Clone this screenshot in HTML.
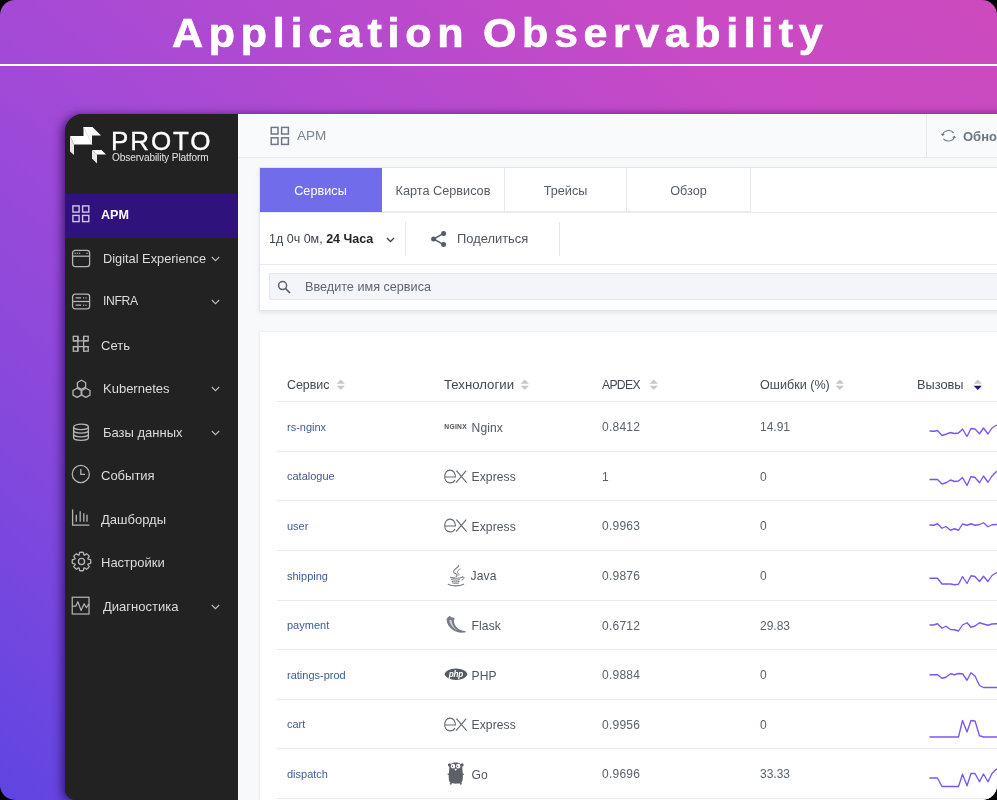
<!DOCTYPE html>
<html lang="ru">
<head>
<meta charset="utf-8">
<title>Application Observability</title>
<style>
*{box-sizing:border-box;margin:0;padding:0}
html,body{width:997px;height:800px;overflow:hidden;background:#000}
body{font-family:"Liberation Sans",sans-serif;position:relative}
#stage{position:absolute;left:0;top:0;width:997px;height:800px;border-radius:15px;overflow:hidden;will-change:transform;
  background:linear-gradient(to top right,#5f45e2 0%,#8748dc 25%,#a54ad6 50%,#c84ac5 82%,#cc4abd 100%)}
#title{position:absolute;left:171.5px;top:8.5px;text-align:left;color:#fff;font-weight:bold;font-size:41px;letter-spacing:5.45px;word-spacing:-3.8px;line-height:48px;white-space:nowrap;transform:scaleX(1.05);transform-origin:0 0;-webkit-text-stroke:0.7px #fff}
#title span{letter-spacing:5.3px}
#rule{position:absolute;left:0;top:64px;width:997px;height:2px;background:#fff}
#app{position:absolute;left:65px;top:114px;width:960px;height:686px;border-radius:18px 0 0 11px;background:#222;overflow:hidden;
  box-shadow:-3px 1.5px 10px 0 rgba(30,0,70,.66)}
#side{position:absolute;left:0;top:0;width:173px;height:700px;background:#222222}
.nav{position:absolute;left:0;width:173px;height:43.5px;color:#dcdcdc;font-size:13px}
.nav .t{position:absolute;left:36px;top:-0.8px;line-height:43.5px;white-space:nowrap}
.nav.c .t{left:38px}
.nav svg.i{position:absolute;left:7px;top:12px}
.nav svg.ch{position:absolute;left:146px;top:18px}
.nav.act{background:#30127c;color:#fff;font-weight:bold}
.nav.act .t{font-size:12.6px;top:0}
#brand{position:absolute;left:46px;top:12px;color:#fff;font-size:26px;line-height:30px;letter-spacing:1.9px;white-space:nowrap;-webkit-text-stroke:0.35px #fff}
#brandsub{position:absolute;left:47px;top:38px;color:#e4e4e4;font-size:10.1px;line-height:12px;white-space:nowrap;letter-spacing:-0.1px}
#main{position:absolute;left:173px;top:0;width:787px;height:700px;background:#f8f9fb}
#hdr{position:absolute;left:0;top:0;width:787px;height:44px;background:#f9fafc;border-bottom:1px solid #e9ebef}
#hdr .hi{position:absolute;left:32px;top:12px}
#hdr .ht{position:absolute;left:59px;top:0;line-height:44px;font-size:13.5px;color:#7b8692}
#hdr .rf{position:absolute;left:688px;top:0;width:120px;height:44px;border-left:1px solid #e6e8ec}
#hdr .rf svg{position:absolute;left:13px;top:15.3px}
#hdr .rf span{position:absolute;left:36px;top:0;line-height:46px;font-size:13px;font-weight:bold;color:#6b7683}
#card1{position:absolute;left:21px;top:53px;width:800px;height:144px;background:#fff;border:1px solid #e3e6eb;box-shadow:0 2px 4px rgba(60,70,90,.10)}
.tab{position:absolute;top:0;height:44px;width:123px;line-height:46px;text-align:center;font-size:12.7px;color:#555d67;border-right:1px solid #e7e9ed;border-bottom:1px solid #e7e9ed}
.tab.on{background:#716cea;color:#fff;border-color:#716cea}
#tabline{position:absolute;left:0;top:44px;width:800px;height:1px;background:#e9ebef}
#tb{position:absolute;left:0;top:45px;width:800px;height:52px;border-bottom:1px solid #e9ebef}
#tb .sep{position:absolute;top:9px;width:1px;height:34px;background:#e4e6ea}
#tb .per{position:absolute;left:9px;top:0;line-height:52px;font-size:12.5px;color:#3f4650;white-space:nowrap}
#tb .per b{color:#1d2126}
#tb .sh{position:absolute;left:197px;top:0;line-height:52px;font-size:12.9px;color:#4d5560}
#srch{position:absolute;left:9px;top:105px;width:800px;height:27px;background:#f4f5f8;border:1px solid #e3e5ea;border-radius:2px}
#srch span{position:absolute;left:35px;top:0;line-height:26px;font-size:12.65px;color:#5f6670}
#srch svg{position:absolute;left:6.5px;top:5.5px}
#card2{position:absolute;left:21px;top:217px;width:800px;height:600px;background:#fff;border:1px solid #eef0f3;box-shadow:0 1px 3px rgba(60,70,90,.06)}
.th{position:absolute;top:0;height:70px;font-size:13px;color:#414a54;white-space:nowrap}
.th span{position:absolute;left:0;top:45px;line-height:16px}
.th svg{position:absolute;top:47px;margin-left:-0.3px}
.hl{position:absolute;left:17px;width:800px;height:1px;background:#e9eaf1}
.row{position:absolute;left:17px;width:800px;height:49.6px;font-size:12.5px;color:#59626d}
.row span{position:absolute;top:0;line-height:49.6px;white-space:nowrap}
.row .s{left:10px;color:#3d5a97;font-size:11px;top:0.8px}
.row .tn{left:194.6px;font-size:12.1px;color:#4f5761;top:1.5px;letter-spacing:0.08px}
.row .a{left:325px;font-size:12px;top:1.3px;letter-spacing:0.25px}
.row .e{left:483px;font-size:12px;top:1.3px}
.row svg.ti{position:absolute;left:166px;top:12px}
.row .ng{left:167.3px;font-size:6.7px;font-weight:bold;color:#4b5058;letter-spacing:0.3px;top:0.4px}
.row svg.sp{position:absolute;left:652px;top:10px}
</style>
</head>
<body>
<div id="stage">
  <div id="title">Application <span>Observability</span></div>
  <div id="rule"></div>
  <div id="app">
    <div id="side">
      <svg id="logo" width="40" height="40" viewBox="0 0 40 40" style="position:absolute;left:4px;top:11px">
        <polygon points="14.5,2 23.5,2 32,10.5 23,10.5 23,19.5 5,19.5 1,11 14.5,11" fill="#ffffff"/>
        <polygon points="1,11 5,19.5 5,30 1,26.5" fill="#e6e6e6"/>
        <path d="M14.5 2L23 19.5" stroke="#d9d9d9" stroke-width="0.7" fill="none"/>
        <polygon points="23,25 32.5,25 37,29.5 28,29.5" fill="#ffffff"/>
        <polygon points="23,25 28,29.5 28,38.5 23,33.5" fill="#e9e9e9"/>
      </svg>
      <div id="brand">PROTO</div>
      <div id="brandsub">Observability Platform</div>
      <div class="nav act" style="top:80.0px"><svg class="i" width="18" height="18" viewBox="0 0 18 18" style="left:7px;top:11.4px"><g fill="none" stroke="#cfc6e8" stroke-width="1.4"><rect x="0.9" y="0.9" width="6.2" height="6.2"/><rect x="10.6" y="0.9" width="6.2" height="6.2"/><rect x="0.9" y="10.4" width="6.2" height="6.2"/><rect x="10.6" y="10.4" width="6.2" height="6.2"/></g></svg><span class="t">APM</span></div>
      <div class="nav c" style="top:123.5px"><svg class="i" width="20" height="19" viewBox="0 0 20 19" style="left:6px;top:11.1px"><g fill="none" stroke="#b4b4b4" stroke-width="1.3"><rect x="1.6" y="1.4" width="17" height="16.2" rx="2.6"/><path d="M1.6 7.2H18.6"/></g><g fill="#b4b4b4"><circle cx="4.2" cy="4.3" r="0.7"/><circle cx="6.4" cy="4.3" r="0.7"/><circle cx="8.6" cy="4.3" r="0.7"/><circle cx="16" cy="4.3" r="0.7"/></g></svg><span class="t" style="font-size:12.8px">Digital Experience</span><svg class="ch" width="9" height="6" viewBox="0 0 9 6"><path d="M0.8 1 L4.5 4.7 L8.2 1" fill="none" stroke="#bdbdbd" stroke-width="1.1"/></svg></div>
      <div class="nav c" style="top:167.0px"><svg class="i" width="20" height="18" viewBox="0 0 20 18" style="left:6px;top:12.3px"><g fill="none" stroke="#b4b4b4" stroke-width="1.3"><rect x="1.6" y="1.2" width="17" height="14.6" rx="2.6"/><path d="M1.6 8.5H18.6"/><path d="M4.6 4.9H10.2M4.6 12.2H10.2" stroke-width="1.2"/></g><g fill="#b4b4b4"><rect x="12" y="4.3" width="1.2" height="1.2"/><rect x="14.4" y="4.3" width="1.2" height="1.2"/><rect x="12" y="11.6" width="1.2" height="1.2"/><rect x="14.4" y="11.6" width="1.2" height="1.2"/></g></svg><span class="t" style="font-size:12.2px;letter-spacing:-0.35px">INFRA</span><svg class="ch" width="9" height="6" viewBox="0 0 9 6"><path d="M0.8 1 L4.5 4.7 L8.2 1" fill="none" stroke="#bdbdbd" stroke-width="1.1"/></svg></div>
      <div class="nav" style="top:210.5px"><svg class="i" width="18" height="18" viewBox="0 0 18 18" style="left:6.5px;top:10.5px"><g fill="none" stroke="#b4b4b4" stroke-width="1.3"><rect x="1.3" y="1.3" width="4.6" height="4.6"/><rect x="11.6" y="1.3" width="4.6" height="4.6"/><rect x="1.3" y="11.6" width="4.6" height="4.6"/><rect x="11.6" y="11.6" width="4.6" height="4.6"/><path d="M5.9 1.3V16.2M11.6 1.3V16.2M1.3 5.9H16.2M1.3 11.6H16.2"/></g></svg><span class="t">Сеть</span></div>
      <div class="nav c" style="top:254.0px"><svg class="i" width="21" height="20" viewBox="0 0 21 20" style="left:6px;top:11.1px"><g fill="none" stroke="#b4b4b4" stroke-width="1.3" stroke-linejoin="round"><path d="M10.5 1.2 L14.6 3.5 V8.1 L10.5 10.4 L6.4 8.1 V3.5 Z"/><path d="M6.1 9.2 L10.2 11.5 V16.1 L6.1 18.4 L2 16.1 V11.5 Z"/><path d="M14.9 9.2 L19 11.5 V16.1 L14.9 18.4 L10.8 16.1 V11.5 Z"/></g></svg><span class="t">Kubernetes</span><svg class="ch" width="9" height="6" viewBox="0 0 9 6"><path d="M0.8 1 L4.5 4.7 L8.2 1" fill="none" stroke="#bdbdbd" stroke-width="1.1"/></svg></div>
      <div class="nav c" style="top:297.5px"><svg class="i" width="18" height="18.6" viewBox="0 0 18 20" preserveAspectRatio="none" style="left:7.3px;top:11.6px"><g fill="none" stroke="#b4b4b4" stroke-width="1.3"><ellipse cx="9" cy="4.2" rx="7.4" ry="2.9"/><path d="M1.6 4.2V15.8C1.6 17.4 4.9 18.7 9 18.7S16.4 17.4 16.4 15.8V4.2"/><path d="M1.6 8.1C1.6 9.7 4.9 11 9 11S16.4 9.7 16.4 8.1"/><path d="M1.6 12C1.6 13.6 4.9 14.9 9 14.9S16.4 13.6 16.4 12"/></g></svg><span class="t">Базы данных</span><svg class="ch" width="9" height="6" viewBox="0 0 9 6"><path d="M0.8 1 L4.5 4.7 L8.2 1" fill="none" stroke="#bdbdbd" stroke-width="1.1"/></svg></div>
      <div class="nav" style="top:341.0px"><svg class="i" width="20.2" height="20.2" viewBox="0 0 21 21" style="left:5.5px;top:8.8px"><g fill="none" stroke="#b4b4b4" stroke-width="1.3"><circle cx="10.2" cy="10.4" r="8.9"/><path d="M10.2 5.2V10.9H14.6"/></g></svg><span class="t">События</span></div>
      <div class="nav" style="top:384.5px"><svg class="i" width="20" height="19" viewBox="0 0 20 19" style="left:6.2px;top:9.5px"><g fill="none" stroke="#b4b4b4" stroke-width="1.3"><path d="M1.600 1.600V17.200H18.400"/><path d="M5.300 6.700V13.700M9.200 3.200V13.700M12.800 5.200V13.700M16 6.700V13.700" stroke-width="1.300"/></g></svg><span class="t">Дашборды</span></div>
      <div class="nav" style="top:428.0px"><svg class="i" width="21" height="21" viewBox="0 0 24 24" style="left:5.8px;top:9.1px"><g fill="none" stroke="#b4b4b4" stroke-width="1.5" stroke-linejoin="round"><circle cx="12" cy="12" r="3.5"/><path d="M9.38 4.34L9.85 1.62A10.60 10.60 0 0 1 14.15 1.62L14.62 4.34A8.10 8.10 0 0 1 15.56 4.73L17.82 3.14A10.60 10.60 0 0 1 20.86 6.18L19.27 8.44A8.10 8.10 0 0 1 19.66 9.38L22.38 9.85A10.60 10.60 0 0 1 22.38 14.15L19.66 14.62A8.10 8.10 0 0 1 19.27 15.56L20.86 17.82A10.60 10.60 0 0 1 17.82 20.86L15.56 19.27A8.10 8.10 0 0 1 14.62 19.66L14.15 22.38A10.60 10.60 0 0 1 9.85 22.38L9.38 19.66A8.10 8.10 0 0 1 8.44 19.27L6.18 20.86A10.60 10.60 0 0 1 3.14 17.82L4.73 15.56A8.10 8.10 0 0 1 4.34 14.62L1.62 14.15A10.60 10.60 0 0 1 1.62 9.85L4.34 9.38A8.10 8.10 0 0 1 4.73 8.44L3.14 6.18A10.60 10.60 0 0 1 6.18 3.14L8.44 4.73A8.10 8.10 0 0 1 9.38 4.34Z"/></g></svg><span class="t">Настройки</span></div>
      <div class="nav c" style="top:471.5px"><svg class="i" width="20" height="20" viewBox="0 0 21 21" style="left:6.4px;top:10px"><g fill="none" stroke="#b4b4b4" stroke-width="1.3"><rect x="1.3" y="1.3" width="17.6" height="17.6"/><path d="M1.3 10.700H5L7.200 6L10.600 15.200L13.800 8.100L16.200 12.300L18.300 8.900L18.900 10.300" stroke-width="1.250" stroke-linejoin="round"/></g></svg><span class="t">Диагностика</span><svg class="ch" width="9" height="6" viewBox="0 0 9 6"><path d="M0.8 1 L4.5 4.7 L8.2 1" fill="none" stroke="#bdbdbd" stroke-width="1.1"/></svg></div>
    </div>
    <div id="main">
      <div id="hdr"><svg class="hi" width="20" height="20" viewBox="0 0 20 20"><g fill="none" stroke="#6e7985" stroke-width="1.5"><rect x="1.2" y="1.4" width="6.8" height="6.6"/><rect x="11.6" y="1.4" width="6.8" height="6.6"/><rect x="1.2" y="11.8" width="6.8" height="6.6"/><rect x="11.6" y="11.8" width="6.8" height="6.6"/></g></svg><span class="ht">APM</span><div class="rf"><svg width="17" height="13.6" viewBox="0 0 17 16" preserveAspectRatio="none"><g fill="none" stroke="#6b7683" stroke-width="1.2"><path d="M2.6 7.2A6 6 0 0 1 13.6 4.6"/><path d="M14.4 8.8A6 6 0 0 1 3.4 11.4"/></g><path d="M0.6 5.6L2.7 8.2L5 5.8Z" fill="#6b7683"/><path d="M16.4 10.4L14.3 7.8L12 10.2Z" fill="#6b7683"/></svg><span>Обновить</span></div></div>
      <div id="card1">
        <div class="tab on" style="left:0;width:122px">Сервисы</div>
        <div class="tab" style="left:122px;width:123px">Карта Сервисов</div>
        <div class="tab" style="left:245px;width:122px">Трейсы</div>
        <div class="tab" style="left:367px;width:124px">Обзор</div>
        <div id="tabline"></div>
        <div id="tb">
          <span class="per">1д 0ч 0м, <b>24 Часа</b></span><svg width="9" height="6" viewBox="0 0 9 6" style="position:absolute;left:126px;top:24px"><path d="M1 1L4.5 4.5L8 1" fill="none" stroke="#3f4650" stroke-width="1.4"/></svg>
          <div class="sep" style="left:145px"></div>
          <svg width="18" height="18" viewBox="0 0 18 18" style="position:absolute;left:170px;top:17px"><g fill="#555d68"><circle cx="13.6" cy="3.4" r="2.5"/><circle cx="3.6" cy="9" r="2.5"/><circle cx="13.6" cy="14.6" r="2.5"/></g><path d="M13.6 3.4L3.6 9L13.6 14.6" fill="none" stroke="#555d68" stroke-width="1.5"/></svg><span class="sh">Поделиться</span>
          <div class="sep" style="left:299px"></div>
        </div>
        <div id="srch"><svg width="15" height="15" viewBox="0 0 15 15"><circle cx="5.6" cy="5.6" r="4" fill="none" stroke="#59616c" stroke-width="1.5"/><path d="M8.6 8.6L13 13" stroke="#59616c" stroke-width="1.7"/></svg><span>Введите имя сервиса</span></div>
      </div>
      <div id="card2">
        <div class="th" style="left:27px"><span style="font-size:12.4px">Сервис</span><svg width="9.6" height="12" viewBox="0 0 9 12" preserveAspectRatio="none" style="left:49px"><path d="M0.6 4.8L4.5 0.6L8.4 4.8Z" fill="#c5c8ce"/><path d="M0.6 6.8L4.5 11L8.4 6.8Z" fill="#c5c8ce"/></svg></div>
        <div class="th" style="left:184px"><span style="font-size:13.2px">Технологии</span><svg width="9.6" height="12" viewBox="0 0 9 12" preserveAspectRatio="none" style="left:76px"><path d="M0.6 4.8L4.5 0.6L8.4 4.8Z" fill="#c5c8ce"/><path d="M0.6 6.8L4.5 11L8.4 6.8Z" fill="#c5c8ce"/></svg></div>
        <div class="th" style="left:342px"><span style="font-size:12.2px;letter-spacing:-0.7px">APDEX</span><svg width="9.6" height="12" viewBox="0 0 9 12" preserveAspectRatio="none" style="left:47px"><path d="M0.6 4.8L4.5 0.6L8.4 4.8Z" fill="#c5c8ce"/><path d="M0.6 6.8L4.5 11L8.4 6.8Z" fill="#c5c8ce"/></svg></div>
        <div class="th" style="left:500px"><span style="font-size:12.6px">Ошибки (%)</span><svg width="9.6" height="12" viewBox="0 0 9 12" preserveAspectRatio="none" style="left:75px"><path d="M0.6 4.8L4.5 0.6L8.4 4.8Z" fill="#c5c8ce"/><path d="M0.6 6.8L4.5 11L8.4 6.8Z" fill="#c5c8ce"/></svg></div>
        <div class="th" style="left:657px"><span style="font-size:12.8px">Вызовы</span><svg width="9.6" height="12" viewBox="0 0 9 12" preserveAspectRatio="none" style="left:56px"><path d="M0.6 4.8L4.5 0.6L8.4 4.8Z" fill="#c5c8ce"/><path d="M0.6 6.8L4.5 11L8.4 6.8Z" fill="#2f137d"/></svg></div>
        <div class="hl" style="top:69.0px"></div>
        <div class="row" style="top:70.0px"><span class="s">rs-nginx</span><span class="ng">NGINX</span><span class="tn">Nginx</span><span class="a">0.8412</span><span class="e">14.91</span></div>
        <div class="hl" style="top:118.7px"></div>
        <div class="row" style="top:119.6px"><span class="s">catalogue</span><svg class="ti" width="26" height="26" viewBox="0 0 26 26"><g fill="none" stroke="#666b73" stroke-width="1.15"><path d="M1.700 13H12.400C12.400 9 10.300 6.100 7 6.100C3.800 6.100 1.700 9 1.700 12.600C1.700 16.200 3.800 18.900 7.100 18.900C9.300 18.900 11 17.800 12 15.900"/><path d="M13.400 6.700L23.600 18.700M23.200 6.700L13.100 18.700"/></g></svg><span class="tn">Express</span><span class="a">1</span><span class="e">0</span></div>
        <div class="hl" style="top:168.3px"></div>
        <div class="row" style="top:169.2px"><span class="s">user</span><svg class="ti" width="26" height="26" viewBox="0 0 26 26"><g fill="none" stroke="#666b73" stroke-width="1.15"><path d="M1.700 13H12.400C12.400 9 10.300 6.100 7 6.100C3.800 6.100 1.700 9 1.700 12.600C1.700 16.200 3.800 18.900 7.100 18.900C9.300 18.900 11 17.800 12 15.900"/><path d="M13.400 6.700L23.600 18.700M23.200 6.700L13.100 18.700"/></g></svg><span class="tn">Express</span><span class="a">0.9963</span><span class="e">0</span></div>
        <div class="hl" style="top:217.9px"></div>
        <div class="row" style="top:218.8px"><span class="s">shipping</span><svg class="ti" width="26" height="26" viewBox="0 0 26 26"><g fill="none" stroke="#7a7f87" stroke-width="1" stroke-linecap="round"><path d="M15.800 2.300C15.200 5.200 10 6.300 10.500 9C10.800 10.900 15.900 10.700 13.300 13.500" stroke-width="1.150"/><path d="M17 6C15 7.200 13.600 8.600 14.900 10.200C15.700 11.100 16.400 11.400 15.900 12.300"/><path d="M7.600 14.400C10.500 15.300 16 15.300 19.600 14.200" stroke-width="1.1"/><path d="M19.400 13.600C21.600 13.400 21.800 16 19 17"/><path d="M8.600 16.600C10.800 17.300 14.400 17.300 16.600 16.700"/><path d="M9 18.400C11 19 14 19 16.200 18.500"/><path d="M9.600 20C11.400 20.500 13.600 20.500 15.600 20.100"/><path d="M5.200 21.300C8.500 23.400 17 23.500 20.600 21.200" stroke-width="1.2"/></g></svg><span class="tn" style="margin-left:-1px">Java</span><span class="a">0.9876</span><span class="e">0</span></div>
        <div class="hl" style="top:267.5px"></div>
        <div class="row" style="top:268.4px"><span class="s">payment</span><svg class="ti" width="26" height="26" viewBox="0 0 26 26"><path d="M3.600 8.200C3.400 6.600 4.600 5.600 5.400 5L6.600 3.800L8.600 5.600L10.400 5.400L12 7C11.400 7.400 11 7.800 10.800 8.400C10.800 13.400 15.200 18.600 22.600 19.200L22.800 20.300C20 21 16.400 20.900 13.600 19.800C7.800 17.600 4.200 13 3.600 8.200Z" fill="#777c84"/><path d="M6.400 8C6.800 12.400 10 16.600 14.600 18.600C11 16 8.800 12 8.600 8.200C8 7.600 7 7.600 6.400 8Z" fill="#c9ccd1"/></svg><span class="tn">Flask</span><span class="a">0.6712</span><span class="e">29.83</span></div>
        <div class="hl" style="top:317.1px"></div>
        <div class="row" style="top:318.0px"><span class="s">ratings-prod</span><svg class="ti" width="26" height="26" viewBox="0 0 26 26"><ellipse cx="13" cy="12.300" rx="11.200" ry="5.700" fill="#555a62"/><text x="12.800" y="14.600" font-family="Liberation Sans, sans-serif" font-size="8.200" font-weight="bold" font-style="italic" fill="#fff" text-anchor="middle" letter-spacing="-0.3">php</text></svg><span class="tn">PHP</span><span class="a">0.9884</span><span class="e">0</span></div>
        <div class="hl" style="top:366.7px"></div>
        <div class="row" style="top:367.6px"><span class="s">cart</span><svg class="ti" width="26" height="26" viewBox="0 0 26 26"><g fill="none" stroke="#666b73" stroke-width="1.15"><path d="M1.700 13H12.400C12.400 9 10.300 6.100 7 6.100C3.800 6.100 1.700 9 1.700 12.600C1.700 16.200 3.800 18.900 7.100 18.900C9.300 18.900 11 17.800 12 15.900"/><path d="M13.400 6.700L23.600 18.700M23.200 6.700L13.100 18.700"/></g></svg><span class="tn">Express</span><span class="a">0.9956</span><span class="e">0</span></div>
        <div class="hl" style="top:416.3px"></div>
        <div class="row" style="top:417.2px"><span class="s">dispatch</span><svg class="ti" width="26" height="26" viewBox="0 0 26 26"><g transform="translate(12.8 0.3) scale(0.93 0.985) translate(-12.8 0)"><g fill="#5d6067"><circle cx="6" cy="3.800" r="1.700"/><circle cx="19.600" cy="3.800" r="1.700"/><path d="M5.800 6.500C5.800 3.200 8.600 1.200 12.800 1.200S19.800 3.200 19.800 6.500C19.800 9.500 20.600 13 20.400 16.500C20.300 19.500 19.600 21.300 18.400 22C16.600 22.900 9 22.900 7.200 22C6 21.300 5.300 19.500 5.200 16.500C5 13 5.800 9.500 5.800 6.500Z"/><ellipse cx="5" cy="13.200" rx="1.100" ry="0.700"/><ellipse cx="20.600" cy="13.200" rx="1.100" ry="0.700"/><ellipse cx="7.400" cy="22.900" rx="1.300" ry="0.800"/><ellipse cx="18.200" cy="22.900" rx="1.300" ry="0.800"/></g><circle cx="9.800" cy="4.900" r="2.300" fill="#fff"/><circle cx="15.400" cy="4.900" r="2.300" fill="#fff"/><circle cx="9.200" cy="5" r="0.700" fill="#5d6067"/><circle cx="14.800" cy="5" r="0.700" fill="#5d6067"/><path d="M11 7.600H14.200L12.600 9.800Z" fill="#fff"/></g></svg><span class="tn">Go</span><span class="a">0.9696</span><span class="e">33.33</span></div>
        <div class="hl" style="top:465.9px"></div>
        <div class="row" style="top:466.8px"><span class="s">web</span><svg class="ti" width="26" height="26" viewBox="0 0 26 26"><g fill="none" stroke="#666b73" stroke-width="1.15"><path d="M1.700 13H12.400C12.400 9 10.300 6.100 7 6.100C3.800 6.100 1.700 9 1.700 12.600C1.700 16.200 3.800 18.900 7.100 18.900C9.300 18.900 11 17.800 12 15.900"/><path d="M13.400 6.700L23.600 18.700M23.200 6.700L13.100 18.700"/></g></svg><span class="tn">Express</span><span class="a">0.99</span><span class="e">0</span></div>
        <div class="hl" style="top:515.5px"></div>
      </div>
    </div>
  </div>
  <svg id="sparks" width="997" height="800" viewBox="0 0 997 800" style="position:absolute;left:0;top:0;pointer-events:none"><g fill="none" stroke="#7a55f2" stroke-width="1.350" stroke-linejoin="round">
    <polyline points="929.5,431.00 934.0,431.25 937.5,430.50 942.0,435.50 946.5,434.00 950.5,432.50 954.5,433.50 958.5,433.00 962.5,429.00 967.0,436.50 971.0,428.50 975.0,429.00 979.5,433.75 983.5,428.00 988.0,434.00 992.0,428.00 996.0,425.50 1000.0,423.50"/>
    <polyline points="929.5,479.50 937.5,479.50 942.0,484.00 946.5,482.50 950.5,480.00 954.5,481.50 958.5,481.00 962.5,477.50 967.0,485.50 971.0,476.50 975.0,477.50 979.5,482.75 983.5,476.00 988.0,482.25 992.0,476.00 996.0,472.00 1000.0,469.00"/>
    <polyline points="929.5,525.00 933.5,525.25 937.5,523.75 942.0,528.25 946.0,526.50 950.5,530.25 954.5,528.75 958.5,530.25 962.5,524.00 967.0,525.25 971.0,523.75 975.0,525.25 979.5,524.50 983.5,522.75 988.0,526.75 992.0,524.75 996.0,524.50 1000.0,524.50"/>
    <polyline points="929.5,578.25 937.5,578.25 942.0,584.00 950.5,584.00 954.5,584.75 958.5,584.25 962.5,576.50 967.0,583.50 971.0,575.75 975.0,576.50 979.5,581.50 983.5,576.25 988.0,581.50 992.0,575.50 996.0,573.00 1000.0,571.00"/>
    <polyline points="929.5,625.00 933.5,625.00 937.5,623.75 942.0,628.25 946.0,626.25 950.5,629.50 954.5,629.75 958.5,631.00 962.5,625.00 967.0,622.75 971.0,627.25 975.0,626.00 979.5,622.75 983.5,624.00 988.0,625.25 992.0,624.00 996.0,623.75 1000.0,623.75"/>
    <polyline points="929.5,674.75 937.5,674.75 942.0,678.25 946.0,677.25 950.5,673.75 954.5,674.75 958.5,673.50 962.5,673.75 967.0,680.25 971.0,672.75 975.0,676.00 979.5,685.50 983.5,687.50 1000.0,687.50"/>
    <polyline points="929.5,737.00 958.5,737.00 962.5,720.50 967.0,732.00 971.0,720.50 975.0,721.00 979.5,735.75 983.5,737.00 1000.0,737.00"/>
    <polyline points="929.5,778.00 937.5,778.00 942.0,786.50 958.5,786.50 962.5,774.25 967.0,785.75 971.0,773.50 975.0,773.50 979.5,781.75 983.5,774.00 988.0,781.75 992.0,773.50 996.0,769.50 1000.0,767.00"/>
  </g></svg>
</div>
</body>
</html>
